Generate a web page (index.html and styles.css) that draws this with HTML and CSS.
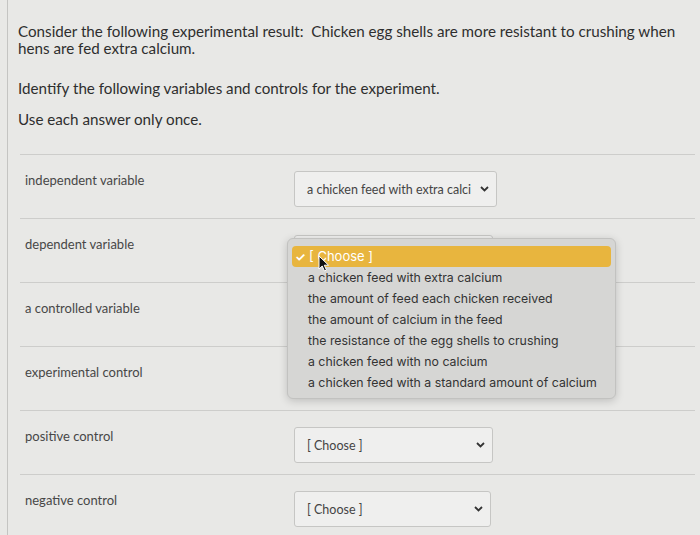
FILE: index.html
```html
<!DOCTYPE html>
<html lang="en">
<head>
  <meta charset="UTF-8">
  <title>Quiz Question</title>
  <link rel="stylesheet" href="styles.css">
</head>
<body>
  <div class="page">
    <div class="question">
      <p class="intro">Consider the following experimental result:&nbsp; Chicken egg shells are more resistant to crushing when hens are fed extra calcium.</p>
      <p class="task">Identify the following variables and controls for the experiment.</p>
      <p class="rule">Use each answer only once.</p>
    </div>

    <div class="answers">
      <div class="row">
        <div class="label">independent variable</div>
        <div class="select wide">
          <span>a chicken feed with extra calci</span>
          <svg class="chev" width="9" height="6" viewBox="0 0 9 6"><path d="M1 1l3.5 3.5L8 1" fill="none" stroke="#333" stroke-width="1.8"/></svg>
        </div>
      </div>
      <div class="row">
        <div class="label">dependent variable</div>
        <div class="select covered">
          <span>[ Choose ]</span>
        </div>
      </div>
      <div class="row">
        <div class="label">a controlled variable</div>
        <div class="select covered">
          <span>[ Choose ]</span>
        </div>
      </div>
      <div class="row">
        <div class="label">experimental control</div>
        <div class="select covered">
          <span>[ Choose ]</span>
        </div>
      </div>
      <div class="row">
        <div class="label">positive control</div>
        <div class="select">
          <span>[ Choose ]</span>
          <svg class="chev" width="9" height="6" viewBox="0 0 9 6"><path d="M1 1l3.5 3.5L8 1" fill="none" stroke="#333" stroke-width="1.8"/></svg>
        </div>
      </div>
      <div class="row">
        <div class="label">negative control</div>
        <div class="select narrow">
          <span>[ Choose ]</span>
          <svg class="chev" width="9" height="6" viewBox="0 0 9 6"><path d="M1 1l3.5 3.5L8 1" fill="none" stroke="#333" stroke-width="1.8"/></svg>
        </div>
      </div>
    </div>

    <ul class="menu">
      <li class="picked"><span class="tick">✓</span>[ Choose ]</li>
      <li>a chicken feed with extra calcium</li>
      <li>the amount of feed each chicken received</li>
      <li>the amount of calcium in the feed</li>
      <li>the resistance of the egg shells to crushing</li>
      <li>a chicken feed with no calcium</li>
      <li>a chicken feed with a standard amount of calcium</li>
    </ul>

    <svg class="cursor" width="12" height="17" viewBox="0 0 12 17">
      <path d="M1 1v13l3.2-3 2.3 5 2-.9-2.2-4.9H10.5z" fill="#111" stroke="#fff" stroke-width="1"/>
    </svg>
  </div>
</body>
</html>
```

FILE: styles.css
```css
body {
  margin: 0;
  background: #e8e8e6;
  font-family: Lato, "Open Sans", sans-serif;
  color: #2e2e2e;
}
.page {
  position: relative;
  height: 535px;
  margin-left: 7px;
  border-left: 1px solid #c4c4c2;
  padding: 0 5px 0 10px;
  overflow: hidden;
}
.question {
  padding-top: 23px;
}
.question p {
  margin: 0;
  font-size: 15.2px;
  line-height: 17px;
}
.intro {
  width: 665px;
}
.task {
  margin-top: 23px !important;
}
.rule {
  margin-top: 14px !important;
}
.answers {
  margin-top: 26px;
  margin-left: 2px;
}
.row {
  display: flex;
  border-top: 1px solid #cdcdcb;
  padding: 16px 0 11px 0;
}
.label {
  width: 269px;
  padding-left: 5px;
  padding-top: 1px;
  font-size: 13px;
  line-height: 16px;
  color: #474747;
}
.select {
  display: flex;
  align-items: center;
  justify-content: space-between;
  box-sizing: border-box;
  width: 199px;
  height: 36px;
  padding: 0 7px 0 12px;
  background: #efefee;
  border: 1px solid #c6c6c4;
  border-radius: 3px;
  font-size: 12.5px;
  color: #444;
}
.select.wide {
  width: 203px;
}
.select.narrow {
  width: 197px;
}
.select.covered span {
  visibility: hidden;
}
.select span {
  white-space: nowrap;
  overflow: hidden;
}
.chev {
  flex-shrink: 0;
}
.menu {
  position: absolute;
  left: 279px;
  top: 238px;
  width: 319px;
  margin: 0;
  padding: 7px 4px 5px 4px;
  list-style: none;
  background: #d6d6d4;
  border: 1px solid #c2c2c0;
  border-radius: 6px;
  box-shadow: 0 2px 8px rgba(0, 0, 0, 0.18);
  font-family: Inter, "Liberation Sans", sans-serif;
  font-size: 12.3px;
  color: #333;
}
.menu li {
  height: 21px;
  line-height: 21px;
  padding-left: 16px;
}
.menu .picked {
  position: relative;
  background: #e8b53e;
  color: #fff;
  border-radius: 4px;
  padding-left: 17px;
  font-size: 13px;
}
.tick {
  position: absolute;
  left: 3px;
  font-size: 12px;
  font-weight: bold;
}
.cursor {
  position: absolute;
  left: 310px;
  top: 255px;
}
```
